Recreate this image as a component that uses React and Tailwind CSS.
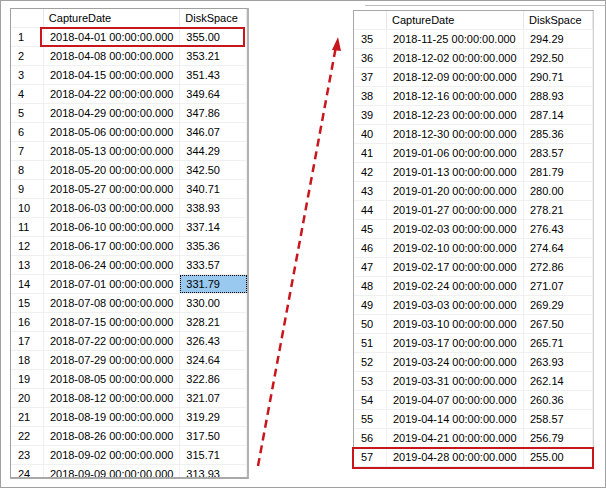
import React from 'react';

const START = Date.UTC(2018, 3, 1);

const rowFor = (n) => {
  const d = new Date(START + (n - 1) * 7 * 86400000);
  const date = d.toISOString().slice(0, 10) + ' 00:00:00.000';
  const disk = (355 - ((n - 1) * 100) / 56).toFixed(2);
  return { n, date, disk };
};

const range = (a, b) => Array.from({ length: b - a + 1 }, (_, i) => rowFor(a + i));

const Grid = ({ rows, diskWidth, selected, className }) => (
  <div className={`bg-white ${className}`}>
    <div className="flex h-[19px] border-b border-[#f0f0f0]">
      <div className="w-[33px] border-r border-[#e6e6e6]" />
      <div className="w-[137px] border-r border-[#e6e6e6] pl-[5px] leading-[19px]">CaptureDate</div>
      <div className={`${diskWidth} border-r border-[#e6e6e6] pl-[5px] leading-[19px]`}>DiskSpace</div>
    </div>
    {rows.map((r) => (
      <div key={r.n} className="flex h-[19px] border-b border-[#f0f0f0]">
        <div className="w-[33px] border-r border-[#f0f0f0] pl-[7px] leading-[18px]">{r.n}</div>
        <div className="w-[137px] border-r border-[#f0f0f0] pl-[6px] leading-[18px]">{r.date}</div>
        <div
          className={`${diskWidth} pl-[6px] leading-[18px] ${
            r.n === selected ? 'bg-[#99c9ef] outline-1 outline-dotted outline-black -outline-offset-1' : 'border-r border-[#f0f0f0]'
          }`}
        >
          {r.disk}
        </div>
      </div>
    ))}
  </div>
);

export default function App() {
  return (
    <div className="w-[606px] h-[488px] bg-white border border-[#a0a0a0] font-['Liberation_Sans',Arial,sans-serif] text-[11px] text-black relative overflow-hidden">
      <div className="flex items-start pl-[9px]">
        <div className="relative mt-[7px] h-[471px] w-[239px] border-l border-t border-[#a0a0a0] border-r-2 border-b-2 border-r-[#b4b4b4] border-b-[#a8a8a8]">
          <Grid rows={range(1, 24)} diskWidth="w-[67px]" selected={14} className="h-full overflow-hidden" />
          <div className="absolute left-[29px] top-[18px] w-[205px] h-[20px] border-2 border-[#c8161d]" />
        </div>

        <div className="ml-[104px] mt-[4px] w-[252px]">
          <div className="ml-[12px] h-px bg-[#bdbdbd]" />
          <div className="relative mt-[4px] w-[241px] h-[458px] border-l border-t border-[#a8a8a8] border-r border-r-[#d0d0d0]">
            <Grid rows={range(35, 57)} diskWidth="w-[69px]" className="h-full" />
            <div className="absolute left-[-2px] top-[436px] w-[242px] h-[22px] border-2 border-[#c8161d]" />
          </div>
        </div>
      </div>

      <svg className="absolute left-0 top-0 pointer-events-none" width="606" height="488">
        <line x1="257" y1="465" x2="334.5" y2="48" stroke="#c8161d" strokeWidth="2.5" strokeDasharray="8 5" />
        <polygon points="337,36 331,49 340,50" fill="#c8161d" />
      </svg>
    </div>
  );
}
